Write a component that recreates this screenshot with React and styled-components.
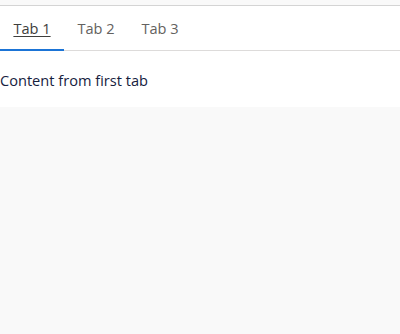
import {useState} from 'react';
import styled, {createGlobalStyle} from 'styled-components';

const GlobalStyle = createGlobalStyle`
  html, body {
    margin: 0;
    padding: 0;
    background-color: #f9f9f9;
  }

  body {
    font-family: 'Open Sans', Lato, sans-serif;
    -webkit-font-smoothing: antialiased;
  }
`;

const tabs = [
  {id: 1, label: 'Tab 1', content: 'Content from first tab'},
  {id: 2, label: 'Tab 2', content: 'Content from second tab'},
  {id: 3, label: 'Tab 3', content: 'Content from third tab'},
];

const App = () => {
  const [active, setActive] = useState(1);
  const current = tabs.find((t) => t.id === active);

  return (
    <Page>
      <GlobalStyle />
      <Card>
        <TabBar role='tablist'>
          {tabs.map((tab) => (
            <Tab
              key={tab.id}
              role='tab'
              $active={tab.id === active}
              onClick={() => setActive(tab.id)}
            >
              {tab.label}
            </Tab>
          ))}
        </TabBar>
        <Panel role='tabpanel'>{current.content}</Panel>
      </Card>
    </Page>
  );
};

export default App;

const Page = styled.div`
  min-height: 334px;
  padding-top: 5px;
  box-sizing: border-box;
`;

const Card = styled.div`
  background-color: #fff;
  border-top: 1px solid #d4d4d4;
`;

const TabBar = styled.div`
  display: flex;
  height: 44px;
  border-bottom: 1px solid #dddbda;
`;

const Tab = styled.button`
  display: flex;
  align-items: center;
  justify-content: center;
  width: 64px;
  margin-bottom: -1px;
  padding: 0;
  border: none;
  border-bottom: 2px solid ${(p) => (p.$active ? '#1b74d6' : 'transparent')};
  background: none;
  font-family: inherit;
  font-size: 14.6px;
  color: ${(p) => (p.$active ? '#3e3e3c' : '#646260')};
  text-decoration: ${(p) => (p.$active ? 'underline' : 'none')};
  text-underline-offset: 2px;
  cursor: pointer;
`;

const Panel = styled.div`
  padding: 19px 0 17px;
  font-size: 14.6px;
  line-height: 20px;
  color: #16213e;
`;
